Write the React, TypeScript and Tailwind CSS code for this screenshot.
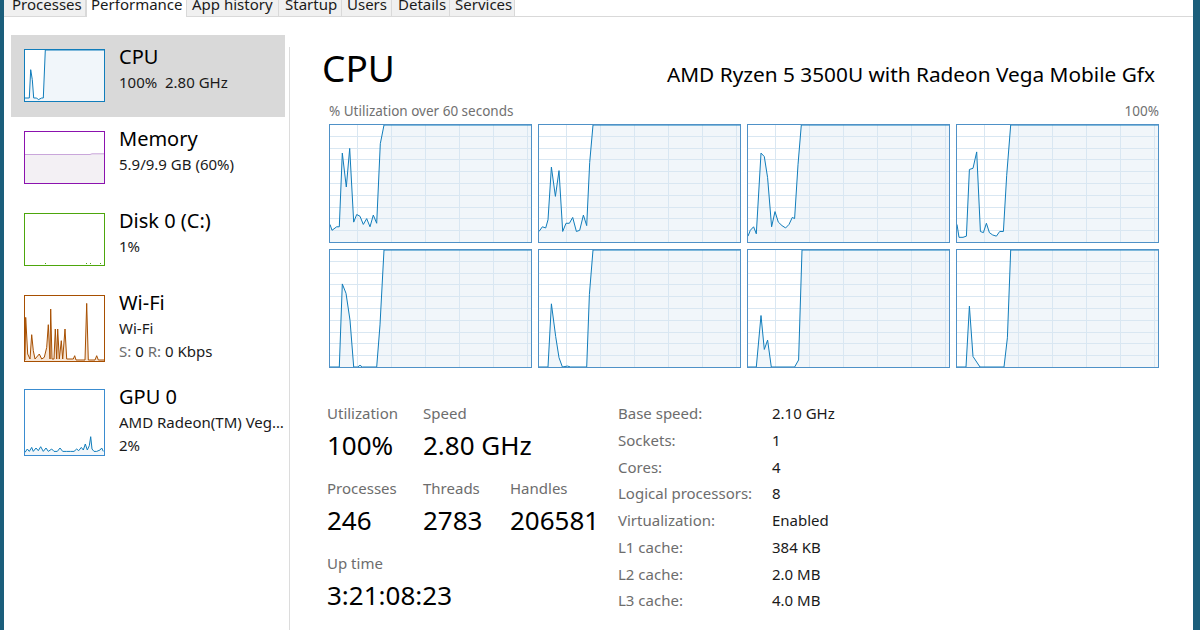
import React from 'react';

type Pt = [number, number];

const TABS = [
  { label: 'Processes', cls: 'w-[82px] pl-[8px]' },
  { label: 'Performance', cls: 'w-[101px] pl-[4px]', active: true },
  { label: 'App history', cls: 'w-[92px] pl-[5px]' },
  { label: 'Startup', cls: 'w-[63px] pl-[6px]' },
  { label: 'Users', cls: 'w-[50px] pl-[5px]' },
  { label: 'Details', cls: 'w-[58px] pl-[6px]' },
  { label: 'Services', cls: 'w-[65px] pl-[5px]' },
];

// x in px from the graph's left edge, y in percent
const CORES: Pt[][] = [
  [[0, 15], [3, 10], [7.7, 13], [10.3, 13], [13.3, 76], [17.3, 47], [20.7, 80], [24.7, 17], [27.7, 23.5], [31, 22], [34.3, 15], [37.7, 20], [41, 13], [44.3, 23], [47.7, 16], [51.3, 84], [55, 100]],
  [[0.7, 9], [4.4, 13], [7.7, 12], [10, 19], [13.4, 64], [17.4, 39], [21, 61], [24.7, 9], [28, 16], [31.4, 16], [34.7, 21], [38.4, 9], [41.7, 10], [45.4, 23], [48.7, 14], [51.7, 68], [55, 100]],
  [[0.6, 5], [3.3, 10], [6.6, 13], [9.3, 7], [14, 76], [17.3, 73], [20.6, 55], [24.6, 13], [28, 26], [31.3, 17], [35, 14], [38.6, 12], [42, 15], [45.3, 21], [47.6, 20], [51, 66], [54.3, 100]],
  [[0.4, 15], [3, 4], [7, 4], [10.4, 5], [13.4, 62], [17, 63], [20.7, 77], [24.4, 9], [27.4, 8], [30.4, 16], [33.4, 8], [36.7, 6], [40.4, 5], [43.7, 9], [47.4, 9], [50.7, 57], [54.7, 100]],
  [[0, 0], [10.3, 0], [13.3, 71], [17, 63], [21, 40], [24.7, 0], [28.7, 0], [31, 1.5], [33.3, 0], [47.7, 0], [51, 36], [55, 100]],
  [[0, 0], [10, 0], [13.4, 54], [17.7, 26], [21, 8], [24.4, 0], [29.4, 0.8], [32.7, 0], [48.7, 0], [51.4, 62], [55, 100]],
  [[0, 0], [9.3, 0], [14, 44], [17.3, 15], [20.6, 23], [24.3, 0], [47.6, 0], [51.6, 6], [55, 100]],
  [[0, 0], [10, 0], [13.4, 52], [17, 9], [24, 0], [48, 0], [51.4, 25], [54.7, 100]],
];

const CPU_THUMB: Pt[] = [[1, 49], [5.3, 49], [6.7, 20.7], [8.3, 30.7], [9.7, 49], [12.7, 49], [14.3, 50.7], [17.7, 49], [19.3, 49], [21.3, 1], [80, 1]];
const MEM_THUMB: Pt[] = [[1, 23.5], [66, 23.5], [68, 22.8], [80, 22.8]];
const WIFI_THUMB: Pt[] = [[1, 65], [1.7, 22.4], [3.7, 59], [6, 64], [7.7, 39.7], [9.3, 55.7], [11, 64], [15.3, 59], [17.7, 64], [20.3, 62.3], [22.7, 52.4], [24.3, 29.7], [26, 64], [26.7, 14], [28, 64], [30, 64], [31.3, 34], [32.7, 64], [33.7, 34], [35.3, 64], [37.3, 45.7], [38.7, 64], [41, 34], [42.7, 64], [49.3, 64], [50.7, 60.7], [52, 65], [61, 65], [62.7, 8.4], [64.3, 65], [71, 65], [72.7, 60.7], [74.3, 65], [80, 65]];
const GPU_THUMB: Pt[] = [[1, 63.4], [3.3, 60], [5.3, 62.4], [7.7, 58.4], [9.3, 62.4], [12, 59], [14.3, 61.7], [16.7, 57.7], [19.3, 62.4], [22, 59], [24.3, 62.4], [27.7, 60], [30, 62.4], [33.3, 62.4], [36, 59], [38.7, 62.4], [42.7, 62.4], [46.7, 62.4], [50, 62.4], [52.7, 60], [54.7, 61.7], [57.3, 58.4], [59.3, 61], [61.3, 55], [63.3, 61], [65.3, 56.7], [66.7, 47.7], [68, 60], [70, 62.4], [72.7, 62.4], [76, 61], [77.7, 59], [79.3, 62.4]];

const toStr = (pts: Pt[]) => pts.map(([x, y]) => `${x},${y}`).join(' ');

function CoreGraph({ data }: { data: Pt[] }) {
  const W = 203;
  const H = 119;
  const pts: Pt[] = [...data, [W - 1, 100] as Pt].map(([x, p]) => [Math.max(1, x), H - 1 - (p / 100) * (H - 2)]);
  const line = toStr(pts);
  return (
    <svg width={W} height={H} className="block">
      <rect width={W} height={H} fill="#ffffff" />
      <polygon points={`${line} ${W - 1},${H - 1} 1,${H - 1}`} fill="#f1f6fa" />
      {[28.5, 62.5, 96.5, 130.5, 164.5, 198.5].map((x) => (
        <line key={x} x1={x} y1={0} x2={x} y2={H} stroke="#d9e7f2" />
      ))}
      {[1, 2, 3, 4, 5, 6, 7, 8, 9].map((k) => (
        <line key={k} x1={0} y1={Math.round(11.8 * k) + 0.5} x2={W} y2={Math.round(11.8 * k) + 0.5} stroke="#d9e7f2" />
      ))}
      <polyline points={line} fill="none" stroke="#117dbb" strokeWidth={1} />
      <rect x={0.5} y={0.5} width={W - 1} height={H - 1} fill="none" stroke="#4f91c7" />
    </svg>
  );
}

function Thumb({
  h,
  border,
  line,
  fill,
  pts,
  ticks,
}: {
  h: number;
  border: string;
  line?: string;
  fill?: string;
  pts?: Pt[];
  ticks?: number[];
}) {
  const W = 81;
  const s = pts ? toStr(pts) : '';
  return (
    <svg width={W} height={h} className="block shrink-0">
      <rect width={W} height={h} fill="#ffffff" />
      {pts && fill ? <polygon points={`${s} 80,${h - 1} 1,${h - 1}`} fill={fill} /> : null}
      {pts && line ? <polyline points={s} fill="none" stroke={line} strokeWidth={1} /> : null}
      {ticks?.map((x) => <line key={x} x1={x} y1={h - 2.5} x2={x + 1} y2={h - 2.5} stroke={border} />)}
      <rect x={0.5} y={0.5} width={W - 1} height={h - 1} fill="none" stroke={border} />
    </svg>
  );
}

function SideItem({
  title,
  lines,
  thumb,
  tall,
  selected,
}: {
  title: string;
  lines: React.ReactNode[];
  thumb: React.ReactNode;
  tall?: boolean;
  selected?: boolean;
}) {
  return (
    <div className={`flex w-[274px] items-start pl-[13px] ${tall ? 'h-[94px]' : 'h-[82px]'} ${selected ? 'bg-[#d9d9d9]' : ''}`}>
      <div className="mt-[14px] shrink-0">{thumb}</div>
      <div className="ml-[14px] mt-[9px] w-[171px] shrink-0">
        <div className="text-[20px] leading-[26px] text-black">{title}</div>
        <div className="mt-[1px]">
          {lines.map((l, i) => (
            <div key={i} className="truncate whitespace-pre text-[15px] leading-[23px] text-[#1a1a1a]">
              {l}
            </div>
          ))}
        </div>
      </div>
    </div>
  );
}

function Stat({ label, value, cls }: { label: string; value: string; cls?: string }) {
  return (
    <div className={cls}>
      <div className="text-[15px] leading-[20px] text-[#6d6d6d]">{label}</div>
      <div className="mt-[6px] text-[26px] leading-[32px] text-black">{value}</div>
    </div>
  );
}

const INFO = [
  ['Base speed:', '2.10 GHz'],
  ['Sockets:', '1'],
  ['Cores:', '4'],
  ['Logical processors:', '8'],
  ['Virtualization:', 'Enabled'],
  ['L1 cache:', '384 KB'],
  ['L2 cache:', '2.0 MB'],
  ['L3 cache:', '4.0 MB'],
];

export default function App() {
  return (
    <div className="flex h-[630px] w-[1200px] overflow-hidden bg-white font-['Noto_Sans',sans-serif] text-black">
      <div className="w-[4px] shrink-0 bg-[#1b5e7b]" />
      <div className="flex min-w-0 flex-1 flex-col">
        <div className="flex h-[17px] shrink-0 overflow-hidden">
          {TABS.map((t) => (
            <div
              key={t.label}
              className={`h-[17px] shrink-0 whitespace-nowrap text-[15px] ${t.cls} ${
                t.active
                  ? 'border-x border-[#d9d9d9] bg-white'
                  : 'border-b border-r border-[#d9d9d9] bg-[#f0f0f0]'
              }`}
            >
              <div className="-mt-[7px] leading-[22px] text-[#1a1a1a]">{t.label}</div>
            </div>
          ))}
          <div className="flex-1 border-b border-[#d9d9d9]" />
        </div>

        <div className="flex min-h-0 flex-1">
          <aside className="flex shrink-0">
            <div className="w-[285px] pl-[7px] pt-[18px]">
              <SideItem
                selected
                title="CPU"
                lines={['100%  2.80 GHz']}
                thumb={<Thumb h={53} border="#117dbb" line="#117dbb" fill="#f1f6fa" pts={CPU_THUMB} />}
              />
              <SideItem
                title="Memory"
                lines={['5.9/9.9 GB (60%)']}
                thumb={<Thumb h={53} border="#8b12ae" line="#c9a6da" fill="#f3f0f4" pts={MEM_THUMB} />}
              />
              <SideItem
                title="Disk 0 (C:)"
                lines={['1%']}
                thumb={<Thumb h={53} border="#4da60c" ticks={[21, 62, 66, 76]} />}
              />
              <SideItem
                tall
                title="Wi-Fi"
                lines={[
                  'Wi-Fi',
                  <>
                    <span className="text-[#6d6d6d]">S:</span> 0 <span className="text-[#6d6d6d]">R:</span> 0 Kbps
                  </>,
                ]}
                thumb={<Thumb h={67} border="#a74f01" line="#a74f01" fill="#f7e6d6" pts={WIFI_THUMB} />}
              />
              <SideItem
                tall
                title="GPU 0"
                lines={['AMD Radeon(TM) Vega 8 Graphics', '2%']}
                thumb={<Thumb h={67} border="#3a8cd0" line="#117dbb" fill="#f1f6fa" pts={GPU_THUMB} />}
              />
            </div>
            <div className="mt-[30px] w-px bg-[#dcdcdc]" />
          </aside>

          <main className="min-w-0 flex-1 pl-[39px] pt-[32px]">
            <div className="-ml-[7px] flex w-[833px] items-baseline justify-between">
              <h1 className="text-[37px] leading-[37px]">CPU</h1>
              <div className="text-[20.8px] leading-[26px]">AMD Ryzen 5 3500U with Radeon Vega Mobile Gfx</div>
            </div>

            <div className="mt-[15px] flex w-[830px] justify-between text-[13.5px] leading-[18px] text-[#707070]">
              <span>% Utilization over 60 seconds</span>
              <span>100%</span>
            </div>

            <div className="mt-[4px] grid grid-cols-[repeat(4,203px)] gap-[6px]">
              {CORES.map((c, i) => (
                <CoreGraph key={i} data={c} />
              ))}
            </div>

            <div className="mt-[33px] flex">
              <div className="-ml-[2px] w-[291px] shrink-0 pt-[2px]">
                <div className="flex">
                  <Stat label="Utilization" value="100%" cls="w-[96px]" />
                  <Stat label="Speed" value="2.80 GHz" />
                </div>
                <div className="mt-[17px] flex">
                  <Stat label="Processes" value="246" cls="w-[96px]" />
                  <Stat label="Threads" value="2783" cls="w-[87px]" />
                  <Stat label="Handles" value="206581" />
                </div>
                <div className="mt-[17px]">
                  <Stat label="Up time" value="3:21:08:23" />
                </div>
              </div>

              <div className="-mt-[1px] text-[15px] leading-[26.75px]">
                {INFO.map(([k, v]) => (
                  <div key={k} className="flex">
                    <span className="w-[154px] text-[#6d6d6d]">{k}</span>
                    <span className="text-[#1a1a1a]">{v}</span>
                  </div>
                ))}
              </div>
            </div>
          </main>
        </div>
      </div>
      <div className="w-[7px] shrink-0 bg-[#1b5e7b]" />
    </div>
  );
}
